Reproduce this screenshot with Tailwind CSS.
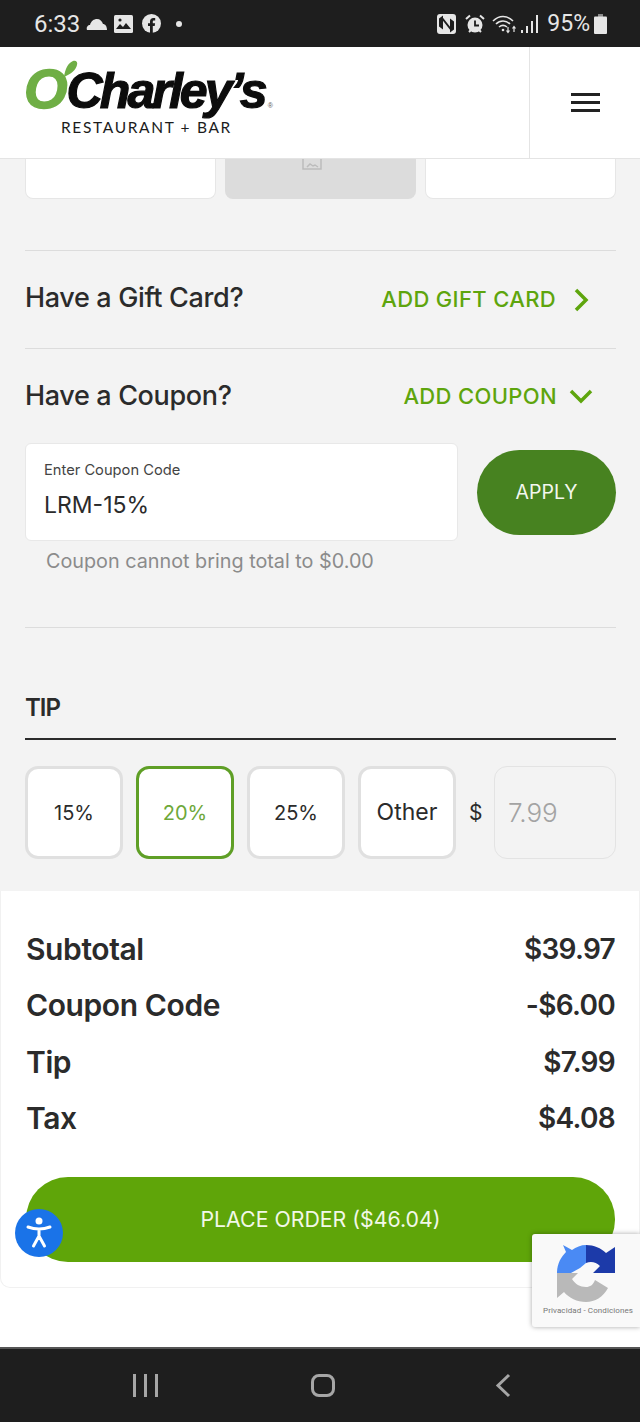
<!DOCTYPE html>
<html lang="en">
<head>
    <meta charset="UTF-8">
    <meta name="viewport" content="width=device-width, initial-scale=1.0">
    <title>O'Charley's Checkout</title>
    <script src="https://cdn.jsdelivr.net/npm/@tailwindcss/browser@4"></script>
</head>
<body class="relative w-[640px] h-[1422px] overflow-hidden flex flex-col bg-white font-['Inter',sans-serif] text-[#2b2b2b]">
    <!-- status bar -->
    <div class="h-[47px] shrink-0 bg-[#1e1e1e] flex items-center pl-[34px] pr-[33px] text-[#e6e6e6] font-['Roboto',sans-serif] text-[24px]">
        <span class="w-[44px] leading-none">6:33</span>
        <svg class="ml-[8px]" width="22" height="14" viewBox="0 0 22 14" fill="#e6e6e6"><path d="M1 13c-1-3 1-5 3-5 1-4 4-6 7-6s5 2 6 5c2 0 4 2 4 6z"/></svg>
        <svg class="ml-[6px]" width="19" height="18" viewBox="0 0 19 18"><rect width="19" height="18" rx="1.5" fill="#e6e6e6"/><path d="M2 14l4-5 3 3 3-4 5 6z" fill="#1e1e1e"/><circle cx="6" cy="5" r="1.6" fill="#1e1e1e"/></svg>
        <svg class="ml-[9px]" width="19" height="19" viewBox="0 0 19 19"><circle cx="9.5" cy="9.500" r="9.500" fill="#e6e6e6"/><path d="M8 19v-7H6V9.300h2V7.500C8 5.200 9.300 4 11.400 4h1.800v2.500h-1.200c-.9 0-1.200.5-1.200 1.200v1.600h2.300l-.4 2.700h-1.900v7z" fill="#1e1e1e"/></svg>
        <span class="ml-[15px] w-[6px] h-[6px] rounded-full bg-[#e6e6e6]"></span>
        <div class="ml-auto flex items-center">
            <svg width="19" height="20" viewBox="0 0 19 20"><rect width="19" height="20" rx="3" fill="#e6e6e6"/><path d="M5 3.500v10l-2-1.500V5zM14 16.500v-10l2 1.500v7zM5 4l9 11.500" stroke="#1e1e1e" stroke-width="2" fill="none"/></svg>
            <svg class="ml-[9px]" width="20" height="20" viewBox="0 0 20 20" fill="none"><circle cx="10" cy="11" r="7.500" fill="#e6e6e6"/><path d="M10 6.500V11.500H14" stroke="#1e1e1e" stroke-width="1.800"/><path d="M1 5l4-3.500M19 5l-4-3.500M4 18l2-2M16 18l-2-2" stroke="#e6e6e6" stroke-width="2"/></svg>
            <svg class="ml-[7px]" width="25" height="20" viewBox="0 0 25 20" fill="none" stroke="#e6e6e6" stroke-width="1.600"><path d="M1 7c6-6 14-6 20 0M4 10c4-4 10-4 14 0M7 13c2.500-2 5.500-2 8 0"/><circle cx="11" cy="16" r="1.300" fill="#e6e6e6" stroke="none"/><path d="M16 13v5M14.500 16.500l1.500 2 1.500-2M22 18v-5M20.500 14.500l1.500-2 1.500 2" stroke-width="1.200"/></svg>
            <svg class="ml-[4px]" width="17" height="20" viewBox="0 0 17 20" fill="#e6e6e6"><rect x="0" y="16" width="2" height="3"/><rect x="5" y="12" width="2" height="7"/><rect x="10" y="7" width="2" height="12"/><rect x="15" y="1" width="2" height="18"/></svg>
            <span class="ml-[9px] leading-none text-[23px]">95%</span>
            <svg class="ml-[4px]" width="13" height="20" viewBox="0 0 13 20" fill="#e6e6e6"><rect x="4" y="0" width="5" height="3" fill="#8a8a8a"/><rect y="2.500" width="13" height="17.500" rx="1"/></svg>
        </div>
    </div>

    <!-- header -->
    <header class="h-[112px] shrink-0 flex bg-white border-b border-[#e4e4e4]">
        <div class="w-[529px] pl-[24px] pt-[13px]">
            <div class="relative h-[58px] flex items-baseline font-['Liberation_Sans',sans-serif] font-bold italic leading-[58px]">
                <span class="text-[#6fae45] text-[56px] [-webkit-text-stroke:1.500px_#6fae45]">O</span>
                <svg class="absolute left-[39px] top-[0px]" width="15" height="17" viewBox="0 0 15 17" fill="#6fae45"><path d="M1 17C2 9 5 3 10 1c3-1 5 1 4 4-1 5-6 9-13 12z"/></svg>
                <span class="text-[#0c0c0c] text-[50px] -ml-[1px] tracking-[-2.900px] [-webkit-text-stroke:1.200px_#0c0c0c]">Charley’s</span>
                <span class="text-[#555] text-[7px] not-italic font-normal ml-[3px]">®</span>
            </div>
            <div class="pl-[37px] text-[#1c1c1c] text-[15.500px] leading-[18px] font-['Lato',sans-serif] tracking-[1.650px]">RESTAURANT + BAR</div>
        </div>
        <div class="flex-1 border-l border-[#e4e4e4] flex flex-col items-center justify-center gap-[5px]">
            <span class="w-[29px] h-[3px] bg-[#222]"></span>
            <span class="w-[29px] h-[3px] bg-[#222]"></span>
            <span class="w-[29px] h-[3px] bg-[#222]"></span>
        </div>
    </header>

    <!-- checkout -->
    <main class="h-[732px] shrink-0 bg-[#f3f3f3] pl-[25px] pr-[24px] flex flex-col">
        <div class="grid grid-cols-3 gap-[9px] h-[40px] shrink-0">
            <div class="bg-white border border-[#e6e6e6] border-t-0 rounded-b-[8px]"></div>
            <div class="bg-[#dcdcdc] rounded-b-[8px] flex justify-center">
                <svg class="mr-[18px]" width="20" height="11" viewBox="0 0 20 11" fill="none" stroke="#bcbcbc" stroke-width="1.500"><path d="M1 0v10h18V0M5 8l3-3 3 2 2-1 3 2"/></svg>
            </div>
            <div class="bg-white border border-[#e6e6e6] border-t-0 rounded-b-[8px]"></div>
        </div>

        <div class="mt-[51px] h-[98px] shrink-0 border-t border-[#dcdcdc] flex items-center justify-between">
            <h2 class="text-[27px] font-medium tracking-[-0.350px] mb-[3px]">Have a Gift Card?</h2>
            <a class="flex items-center text-[#5ea50d] text-[22px] font-medium tracking-[0.350px] pr-[27px]">ADD GIFT CARD
                <svg class="ml-[18px]" width="15" height="24" viewBox="0 0 15 24" fill="none" stroke="#5ea50d" stroke-width="3.500"><path d="M2 2l10 10L2 22"/></svg>
            </a>
        </div>

        <div class="h-[95px] shrink-0 border-t border-[#dcdcdc] flex items-center justify-between">
            <h2 class="text-[27px] font-medium tracking-[-0.350px]">Have a Coupon?</h2>
            <a class="flex items-center text-[#5ea50d] text-[22px] font-medium tracking-[0.350px] pr-[23px]">ADD COUPON
                <svg class="ml-[12px]" width="24" height="15" viewBox="0 0 24 15" fill="none" stroke="#5ea50d" stroke-width="3.500"><path d="M2 2l10 10L22 2"/></svg>
            </a>
        </div>

        <div class="flex items-center justify-between h-[98px] shrink-0">
            <div class="w-[433px] h-[98px] bg-white border border-[#e8e8e8] rounded-[6px] pl-[18px] pt-[17px]">
                <div class="text-[14.700px] leading-[18px] text-[#444]">Enter Coupon Code</div>
                <div class="mt-[9px] text-[23px] leading-[34px] text-[#2b2b2b]">LRM-15%</div>
            </div>
            <button class="w-[139px] h-[85px] pt-[2px] rounded-full bg-[#478220] text-[#f3f7ee] text-[19.500px]">APPLY</button>
        </div>
        <p class="mt-[7px] pl-[21px] text-[19.800px] leading-[26px] text-[#8b8b8b]">Coupon cannot bring total to $0.00</p>

        <div class="mt-[53px] border-t border-[#dcdcdc] h-[113px] shrink-0 flex flex-col justify-end">
            <div class="border-b-2 border-[#2b2b2b] h-[45px] text-[24px] font-semibold tracking-[-1px] leading-[26px]">TIP</div>
        </div>

        <div class="mt-[26px] flex items-center h-[93px] shrink-0 text-[20px]">
            <button class="shrink-0 w-[98px] h-[93px] bg-white border-[3px] border-[#e0e0e0] rounded-[13px]">15%</button>
            <button class="shrink-0 ml-[13px] w-[98px] h-[93px] bg-white border-[3px] border-[#5f9f26] rounded-[13px] text-[#6ea83a]">20%</button>
            <button class="shrink-0 ml-[13px] w-[98px] h-[93px] bg-white border-[3px] border-[#e0e0e0] rounded-[13px]">25%</button>
            <button class="shrink-0 ml-[13px] w-[98px] h-[93px] bg-white border-[3px] border-[#e0e0e0] rounded-[13px] text-[23px]">Other</button>
            <span class="shrink-0 ml-[13px] w-[25px] text-[21px]">$</span>
            <div class="shrink-0 w-[122px] h-[93px] border border-[#e3e3e3] rounded-[13px] flex items-center pl-[13px] text-[26px] text-[#a3a3a3] font-light">7.99</div>
        </div>
    </main>

    <!-- order summary -->
    <section class="h-[397px] shrink-0 bg-white border-b border-x border-[#f1f1f1] rounded-b-[10px] pl-[25px] pr-[24px] pt-[30px]">
        <dl class="text-[30px] font-semibold tracking-[-0.400px]">
            <div class="flex justify-between h-[56px] leading-[56px]"><dt>Subtotal</dt><dd class="text-[28px] tracking-[-0.700px]">$39.97</dd></div>
            <div class="flex justify-between h-[57px] leading-[57px]"><dt>Coupon Code</dt><dd class="text-[28px] tracking-[-0.700px]">-$6.00</dd></div>
            <div class="flex justify-between h-[56px] leading-[56px]"><dt>Tip</dt><dd class="text-[28px] tracking-[-0.700px]">$7.99</dd></div>
            <div class="flex justify-between h-[56px] leading-[56px]"><dt>Tax</dt><dd class="text-[28px] tracking-[-0.700px]">$4.08</dd></div>
        </dl>
        <button class="mt-[31px] w-[589px] h-[85px] rounded-[42px] bg-[#5fa509] text-[#f2f8e8] text-[21.300px] pt-[1px]">PLACE ORDER ($46.04)</button>
    </section>

    <div class="flex-1 bg-white"></div>

    <!-- nav bar -->
    <nav class="h-[75px] shrink-0 bg-[#1e1e1e] border-t-2 border-[#555] relative flex items-center justify-around">
        <div class="absolute left-[133px] top-[25px] flex gap-[8px]">
            <span class="w-[3px] h-[23px] bg-[#a6a6a6]"></span>
            <span class="w-[3px] h-[23px] bg-[#a6a6a6]"></span>
            <span class="w-[3px] h-[23px] bg-[#a6a6a6]"></span>
        </div>
        <span class="absolute left-[311px] top-[25px] w-[24px] h-[23px] border-[3px] border-[#a6a6a6] rounded-[8px]"></span>
        <svg class="absolute left-[495px] top-[24px]" width="16" height="25" viewBox="0 0 16 25" fill="none" stroke="#a6a6a6" stroke-width="3"><path d="M14 2L3 12.500 14 23"/></svg>
    </nav>

    <!-- accessibility widget -->
    <div class="absolute left-[15px] top-[1209px] w-[48px] h-[48px] rounded-full bg-[#1a73e8] flex items-center justify-center">
        <svg width="26" height="32" viewBox="0 0 26 32" fill="none" stroke="white" stroke-width="3" stroke-linecap="round"><circle cx="13" cy="4" r="3.500" fill="white" stroke="none"/><path d="M2 10c4 1.500 7 2 11 2s7-.5 11-2M13 12v7M13 19L7.500 29M13 19l5.500 10" /></svg>
    </div>

    <!-- recaptcha -->
    <div class="absolute left-[532px] top-[1234px] w-[108px] h-[93px] bg-[#f9f9f9] rounded-l-[3px] shadow-[0_0_5px_rgba(0,0,0,0.35)]">
        <svg class="ml-[25px] mt-[10px]" width="58" height="59" viewBox="0 0 58 59">
            <path d="M29 1V19L23 24 14 29H0C0 20 4 13 9 8L6 1 15 6C19 3 24 1 29 1Z" fill="#4a8af4"/>
            <path d="M29 1C37 1 44 4 49 9L58 3V29H36L43 22C39 18 34 17 29 19Z" fill="#1c3aa9"/>
            <path d="M0 29H21L15 35C18 40 23 43 29 43 33 43 36 41 38 36L51 44C46 53 38 58 29 58 20 58 12 54 7 48L0 54Z" fill="#b9b9b9"/>
        </svg>
        <div class="pl-[11px] mt-[2px] text-[8px] leading-[12px] tracking-[0.100px] text-[#777] font-['Roboto',sans-serif] whitespace-nowrap">Privacidad - Condiciones</div>
    </div>
</body>
</html>
